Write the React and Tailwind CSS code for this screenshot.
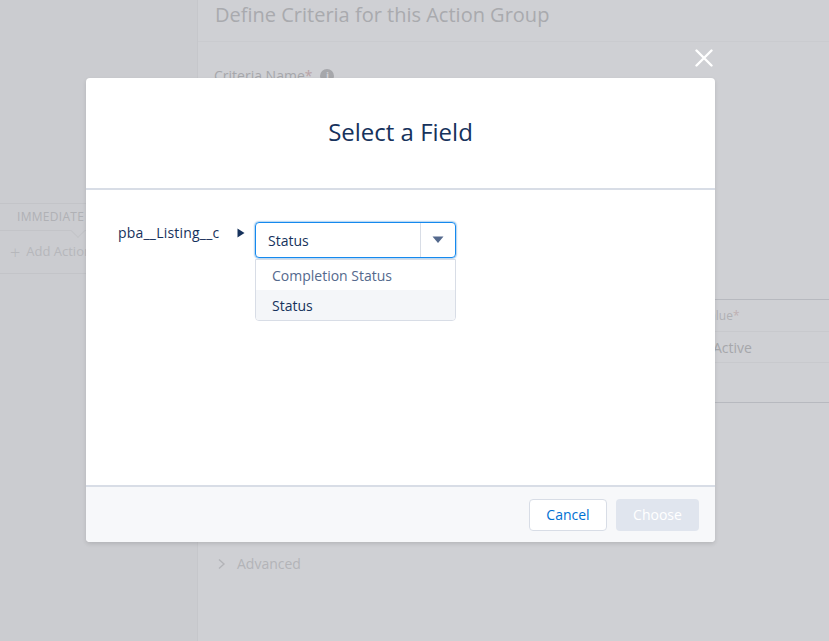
import React from "react";

export default function App() {
  const font = { fontFamily: '"Open Sans", "Noto Sans", Arial, sans-serif' };
  return (
    <div
      className="relative w-[829px] h-[641px] overflow-hidden bg-[#cfd0d4]"
      style={font}
    >
      {/* background page (already dimmed) */}
      <div className="flex h-full">
        <div className="w-[198px] shrink-0 bg-[#cbccd0] border-r border-[#c6c7cb] pt-[203px]">
          <div className="relative h-[28px] border-y border-[#c3c4c8] flex items-center pl-[17px] text-[12px] tracking-[0.3px] text-[#b0b1b5]">
            IMMEDIATE
            <span className="absolute left-[73px] bottom-[-6px] w-[10px] h-[10px] rotate-45 bg-[#cbccd0] border-r border-b border-[#c3c4c8]" />
          </div>
          <div className="h-[43px] border-b border-[#c3c4c8] flex items-center pl-[10px] text-[13px] text-[#b6b7bb]">
            <span className="text-[18px] leading-none mr-[6px] font-light">+</span>
            Add Action
          </div>
        </div>
        <div className="flex-1 relative">
          <div className="h-[42px] border-b border-[#cacbcf] pl-[17px] text-[20px] text-[#a9aaae]">
            Define Criteria for this Action Group
          </div>
          <div className="pl-[16px] pt-[23px] flex items-center text-[14px] text-[#a6a7ab]">
            Criteria Name<span className="text-[#b9a3a6]">*</span>
            <span className="ml-[8px] w-[14px] h-[14px] rounded-full bg-[#a6a7ab] text-[#cfd0d4] text-[10px] font-bold flex items-center justify-center leading-none">
              i
            </span>
          </div>
          <div className="absolute left-[504px] top-[299px] w-[140px]">
            <div className="border-t border-[#b7b9bf] h-[32px] flex items-center text-[12px] text-[#b0b1b5]">
              Value<span className="text-[#bfb0b3]">*</span>
            </div>
            <div className="border-t border-[#c8c9cd] h-[31px] flex items-center pl-[11px] text-[14px] text-[#a6a7ab]">
              Active
            </div>
            <div className="border-t border-[#c8c9cd] h-[40px]" />
            <div className="border-t border-[#b7b9bf]" />
          </div>
          <div className="absolute left-[19px] top-[553px] flex items-center text-[14px] text-[#b3b4b8]">
            <svg width="10" height="12" viewBox="0 0 10 12" className="mr-[10px]">
              <path d="M2 1.5 L7 6 L2 10.5" fill="none" stroke="#b3b4b8" strokeWidth="1.4" />
            </svg>
            Advanced
          </div>
        </div>
      </div>

      {/* close X */}
      <button className="absolute left-[695px] top-[49px] w-[18px] h-[18px]">
        <svg width="18" height="18" viewBox="0 0 18 18">
          <path d="M1.5 1.5 L16.5 16.5 M16.5 1.5 L1.5 16.5" stroke="#fff" strokeWidth="2.4" strokeLinecap="round" />
        </svg>
      </button>

      {/* modal */}
      <div className="absolute left-[86px] top-[78px] w-[629px] h-[464px] bg-white rounded-[4px] shadow-[0_2px_4px_rgba(0,0,0,0.12)] flex flex-col overflow-hidden">
        <div className="h-[112px] shrink-0 border-b-2 border-[#d8dde6] flex items-center justify-center">
          <h2 className="text-[24px] text-[#16325c] pb-[2px]">Select a Field</h2>
        </div>
        <div className="flex-1 flex items-start pt-[32px] pl-[32px] text-[14px] text-[#16325c]">
          <div className="flex items-center">
            <span className="w-[108px] tracking-[0.2px]">pba__Listing__c</span>
            <svg width="8" height="10" viewBox="0 0 8 10" className="ml-[11px]">
              <path d="M0.5 0.5 L7.5 5 L0.5 9.5 Z" fill="#16325c" />
            </svg>
          </div>
          <div className="ml-[10px] w-[201px]">
            <div className="h-[36px] border border-[#1589ee] rounded-[4px] flex items-stretch shadow-[0_0_2px_#0070d2]">
              <div className="flex-1 flex items-center pl-[12px] text-[14px] text-[#16325c]">Status</div>
              <div className="w-[35px] border-l border-[#d8dde6] flex items-center justify-center">
                <svg width="12" height="8" viewBox="0 0 12 8">
                  <path d="M0.5 0.5 L11.5 0.5 L6 7 Z" fill="#54698d" />
                </svg>
              </div>
            </div>
            <div className="mt-[1px] border border-[#d8dde6] rounded-b-[4px] bg-white overflow-hidden">
              <div className="h-[30px] flex items-center pl-[16px] text-[14px] text-[#54698d]">Completion Status</div>
              <div className="h-[30px] flex items-center pl-[16px] text-[14px] bg-[#f4f6f9] text-[#16325c]">Status</div>
            </div>
          </div>
        </div>
        <div className="h-[57px] shrink-0 border-t-2 border-[#d8dde6] bg-[#f7f8fa] flex items-center justify-end gap-[9px] pr-[16px]">
          <button className="h-[32px] w-[78px] rounded-[4px] border border-[#d8dde6] bg-white text-[14px] text-[#0070d2]">
            Cancel
          </button>
          <button className="h-[32px] w-[83px] rounded-[4px] bg-[#e0e5ee] text-[14px] text-white">
            Choose
          </button>
        </div>
      </div>
    </div>
  );
}
